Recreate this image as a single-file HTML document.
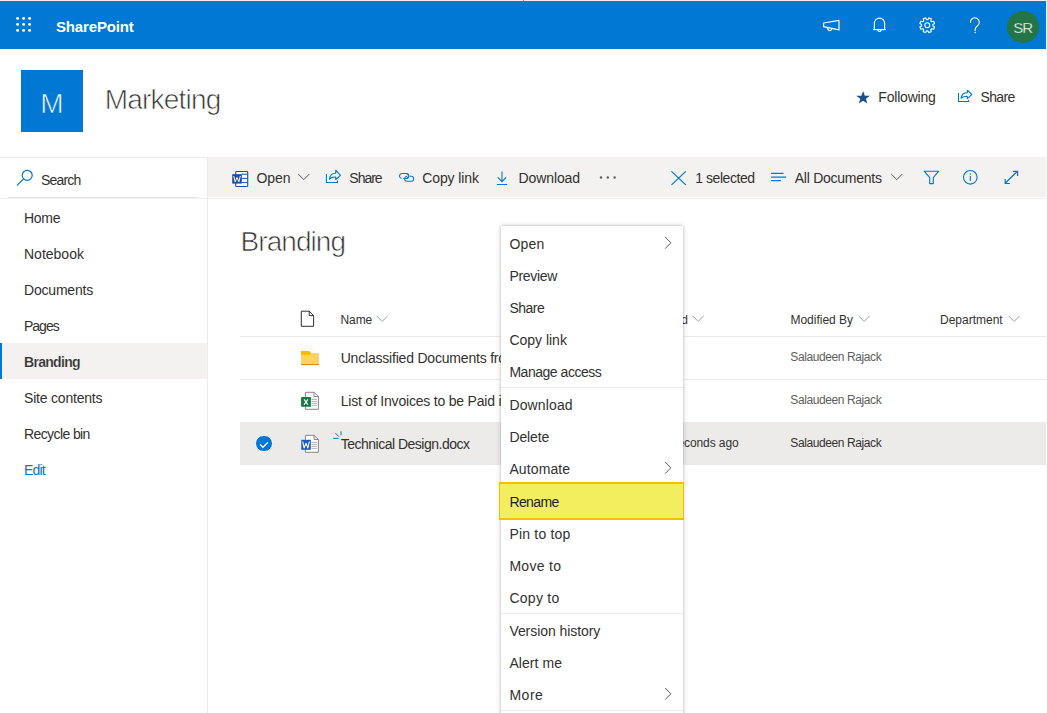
<!DOCTYPE html>
<html><head><meta charset="utf-8">
<style>
*{box-sizing:border-box;margin:0;padding:0}
html,body{width:1047px;height:713px;overflow:hidden;background:#fff}
body{position:relative;font-family:"Liberation Sans",sans-serif;color:#323130}
.a{position:absolute}
.t{position:absolute;white-space:nowrap;line-height:1;font-size:14px}
svg{position:absolute;overflow:visible}
</style></head><body>

<!-- top strip -->
<div class="a" style="left:0;top:0;width:1047px;height:1px;background:#f6ebe6"></div>
<div class="a" style="left:523px;top:0;width:1px;height:1px;background:#9a8f8a"></div>
<!-- suite header -->
<div class="a" style="left:0;top:1px;width:1046px;height:48px;background:#0078d4"></div>
<svg style="left:0;top:0" width="60" height="49">
 <g fill="#fff">
  <circle cx="17.6" cy="18.4" r="1.45"/><circle cx="23.6" cy="18.4" r="1.45"/><circle cx="29.6" cy="18.4" r="1.45"/>
  <circle cx="17.6" cy="24.4" r="1.45"/><circle cx="23.6" cy="24.4" r="1.45"/><circle cx="29.6" cy="24.4" r="1.45"/>
  <circle cx="17.6" cy="30.4" r="1.45"/><circle cx="23.6" cy="30.4" r="1.45"/><circle cx="29.6" cy="30.4" r="1.45"/>
 </g>
</svg>
<div class="t" style="left:56px;top:18.8px;font-size:15px;font-weight:700;color:#fff;letter-spacing:-0.15px">SharePoint</div>

<!-- megaphone -->
<svg style="left:815px;top:12px" width="30" height="26">
 <g fill="none" stroke="#fff" stroke-width="1.2" stroke-linejoin="round">
  <path d="M8.6,11 L24,8.3 L24,17.9 L8.6,14.7 Z"/>
  <path d="M12.5,15.6 C12.5,19.4 16.8,19.4 16.8,16.4"/>
 </g>
</svg>
<!-- bell -->
<svg style="left:865px;top:12px" width="30" height="26">
 <g fill="none" stroke="#fff" stroke-width="1.2">
  <path d="M9.4,17.6 L9.4,11.3 A5.1,5.1 0 0 1 19.6,11.3 L19.6,17.6"/>
  <path d="M8,17.6 L20.8,17.6" />
  <path d="M12.8,17.8 A1.7,1.7 0 0 0 16.2,17.8"/>
 </g>
</svg>
<!-- gear -->
<svg style="left:918.85px;top:16.7px" width="17" height="17">
 <path fill="none" stroke="#fff" stroke-width="1.1" stroke-linejoin="round" d="M8.95,2.59 L9.92,0.89 L12.28,1.86 L11.76,3.76 L12.74,4.74 L14.64,4.22 L15.61,6.58 L13.91,7.55 L13.91,8.95 L15.61,9.92 L14.64,12.28 L12.74,11.76 L11.76,12.74 L12.28,14.64 L9.92,15.61 L8.95,13.91 L7.55,13.91 L6.58,15.61 L4.22,14.64 L4.74,12.74 L3.76,11.76 L1.86,12.28 L0.89,9.92 L2.59,8.95 L2.59,7.55 L0.89,6.58 L1.86,4.22 L3.76,4.74 L4.74,3.76 L4.22,1.86 L6.58,0.89 L7.55,2.59Z"/>
 <circle cx="8.25" cy="8.25" r="2.45" fill="none" stroke="#fff" stroke-width="1.1"/>
</svg>
<!-- help -->
<svg style="left:965px;top:12.8px" width="20" height="26">
 <g fill="none" stroke="#fff" stroke-width="1.15" stroke-linecap="round">
  <path d="M5.4,9.3 A4.45,4.45 0 1 1 12.5,12.8 C10.8,14 10.2,14.9 10.2,16.6 L10.2,17.4"/>
 </g>
 <circle cx="10.2" cy="19.4" r="0.75" fill="#fff"/>
</svg>
<!-- avatar -->
<div class="a" style="left:1007.4px;top:11px;width:31.6px;height:31.6px;border-radius:50%;background:#237446"></div>
<div class="t" style="left:1007.4px;width:31.6px;text-align:center;top:20px;font-size:15px;color:#fff;letter-spacing:-0.9px;text-indent:-0.9px;-webkit-text-stroke:0.3px #237446">SR</div>

<!-- site header -->
<div class="a" style="left:21px;top:70px;width:62px;height:62px;background:#0078d4"></div>
<div class="t" style="left:21px;width:62px;text-align:center;top:89.8px;font-size:28px;color:#fff;-webkit-text-stroke:0.7px #0078d4">M</div>
<div class="t" style="left:104.8px;top:86px;font-size:28px;letter-spacing:-0.8px;color:#323130;-webkit-text-stroke:0.7px #fff;paint-order:normal">Marketing</div>

<!-- following / share -->
<svg style="left:855px;top:89px" width="17" height="16">
 <path fill="#1a4f8b" d="M8.10,1.90 L9.81,6.63 L15.02,6.74 L10.87,9.77 L12.38,14.56 L8.10,11.70 L3.82,14.56 L5.33,9.77 L1.18,6.74 L6.39,6.63Z"/>
</svg>
<div class="t" style="left:878.3px;top:89.8px;letter-spacing:-0.2px">Following</div>
<svg style="left:952px;top:84px" width="24" height="22">
 <g fill="none" stroke="#0078d4" stroke-width="1.05" stroke-linejoin="round">
  <path d="M6.5,9 L6.5,17.5 L16.7,17.5 L16.7,15.8"/>
  <path d="M15.3,6.2 L19.8,10.5 L15.3,14.7 L15.3,12.3 C12.7,12.2 10.7,12.8 9,14.3 C9.6,10.8 12,8.6 15.3,8.6 Z"/>
 </g>
</svg>
<div class="t" style="left:980.4px;top:89.8px;letter-spacing:-0.6px">Share</div>

<!-- line under site header -->
<div class="a" style="left:0;top:157px;width:208px;height:1px;background:#edebe9"></div>

<!-- left nav -->
<div class="a" style="left:207px;top:157px;width:1px;height:556px;background:#edebe9"></div>
<svg style="left:16px;top:169px" width="19" height="18">
 <g fill="none" stroke="#0078d4" stroke-width="1.2">
  <circle cx="11.2" cy="6.3" r="5"/>
  <path d="M7.6,9.9 L1.3,16.2" stroke-linecap="round"/>
 </g>
</svg>
<div class="t" style="left:41px;top:172.5px;letter-spacing:-0.8px">Search</div>
<div class="a" style="left:8px;top:197px;width:191px;height:2px;background:#e8e6e4"></div>

<div class="a" style="left:0;top:343px;width:207px;height:36px;background:#f3f2f1"></div>
<div class="a" style="left:0;top:343px;width:2px;height:36px;background:#0078d4"></div>
<div class="t" style="left:24px;top:210.9px;letter-spacing:-0.3px">Home</div>
<div class="t" style="left:24px;top:246.9px;letter-spacing:0px">Notebook</div>
<div class="t" style="left:24px;top:282.9px;letter-spacing:-0.2px">Documents</div>
<div class="t" style="left:24px;top:318.9px;letter-spacing:-1px">Pages</div>
<div class="t" style="left:24px;top:354.9px;font-weight:700;letter-spacing:-0.7px;-webkit-text-stroke:0.15px #f3f2f1">Branding</div>
<div class="t" style="left:24px;top:390.9px;letter-spacing:-0.2px">Site contents</div>
<div class="t" style="left:24px;top:426.9px;letter-spacing:-0.6px">Recycle bin</div>
<div class="t" style="left:24px;top:462.9px;color:#0078d4;letter-spacing:-0.8px">Edit</div>

<!-- command bar -->
<div class="a" style="left:208px;top:157px;width:838px;height:40px;background:#f3f2f1"></div>
<div class="a" style="left:0;top:198px;width:1046px;height:1px;background:#f0efee"></div>

<!-- word icon -->
<svg style="left:231px;top:170px" width="18" height="18">
 <rect x="4.7" y="1.5" width="12" height="15" rx="0.8" fill="#fff" stroke="#1f4e98" stroke-width="1.1"/>
 <path d="M10.5,4.2 H16.5 M10.5,8.4 H16.5 M10.5,12.6 H16.5" stroke="#1f4e98" stroke-width="1"/>
 <rect x="1.2" y="4.2" width="9.6" height="9.4" fill="#1f4e98"/>
 <path d="M2.7,6 L4.2,11.8 L6,7.4 L7.8,11.8 L9.3,6" fill="none" stroke="#fff" stroke-width="1" stroke-linejoin="round"/>
</svg>
<div class="t" style="left:256.5px;top:171px;letter-spacing:-0.1px">Open</div>
<svg style="left:297px;top:172px" width="14" height="10">
 <path d="M1.2,2 L6.8,7.6 L12.4,2" fill="none" stroke="#605e5c" stroke-width="1"/>
</svg>
<!-- share -->
<svg style="left:325px;top:169px" width="17" height="15">
 <g fill="none" stroke="#0078d4" stroke-width="1.05" stroke-linejoin="round">
  <path d="M1.4,4.9 L1.4,13.5 L12.5,13.5 L12.5,11.5"/>
  <path d="M10.7,1.2 L15.5,6.3 L10.7,10.5 L10.7,8.1 C8,8 5.8,8.7 4.4,10.2 C5,6.5 7.5,4.3 10.7,4.3 Z"/>
 </g>
</svg>
<div class="t" style="left:349.3px;top:171px;letter-spacing:-1px">Share</div>
<!-- link -->
<svg style="left:398px;top:172px" width="18" height="12">
 <g fill="none" stroke="#0078d4" stroke-width="1.05">
  <rect x="1.55" y="1.4" width="9.1" height="5.1" rx="2.55"/>
  <path d="M5.4,6.5 L3.5,6.5" stroke="#f3f2f1" stroke-width="1.6"/>
  <rect x="6.6" y="4.3" width="9.1" height="5.0" rx="2.5"/>
  <path d="M9.2,4.3 L11.5,4.3" stroke="#f3f2f1" stroke-width="1.6"/>
  <path d="M8.1,1.4 A2.55,2.55 0 0 1 8.1,6.5 L6.5,6.5"/>
 </g>
</svg>
<div class="t" style="left:422.2px;top:171px;letter-spacing:-0.1px">Copy link</div>
<!-- download -->
<svg style="left:495px;top:170px" width="14" height="16">
 <g fill="none" stroke="#0078d4" stroke-width="1.1">
  <path d="M7,1.5 L7,11.5 M2.8,7.4 L7,11.6 L11.2,7.4 M1.8,14.5 L12.2,14.5"/>
 </g>
</svg>
<div class="t" style="left:518.5px;top:171px;letter-spacing:-0.1px">Download</div>
<svg style="left:598px;top:174px" width="20" height="8">
 <g fill="#605e5c"><circle cx="3" cy="3.5" r="1.2"/><circle cx="9.8" cy="3.5" r="1.2"/><circle cx="16.6" cy="3.5" r="1.2"/></g>
</svg>
<!-- X -->
<svg style="left:670px;top:169.5px" width="18" height="17">
 <path d="M1.5,1.4 L15.8,14.9 M15.8,1.4 L1.5,14.9" fill="none" stroke="#0078d4" stroke-width="1.2"/>
</svg>
<div class="t" style="left:695.3px;top:171px;letter-spacing:-0.45px">1 selected</div>
<!-- lines -->
<svg style="left:770px;top:171px" width="18" height="12">
 <path d="M1.1,2.4 H13.6 M1.1,6.1 H16.2 M1.1,9.6 H10.8" fill="none" stroke="#0078d4" stroke-width="1.1"/>
</svg>
<div class="t" style="left:794.7px;top:171px;letter-spacing:-0.25px">All Documents</div>
<svg style="left:890px;top:172px" width="14" height="10">
 <path d="M1.2,2 L6.8,7.6 L12.4,2" fill="none" stroke="#605e5c" stroke-width="1"/>
</svg>
<!-- filter -->
<svg style="left:922.6px;top:170px" width="18" height="15">
 <path d="M1.2,1.2 L15.8,1.2 L10.3,7.6 L10.3,13.6 L6.7,13.6 L6.7,7.6 Z" fill="none" stroke="#0078d4" stroke-width="1.1" stroke-linejoin="round"/>
</svg>
<!-- info -->
<svg style="left:962px;top:170px" width="17" height="15">
 <circle cx="8.3" cy="7.3" r="6.8" fill="none" stroke="#0078d4" stroke-width="1.1"/>
 <path d="M8.3,6 V11" stroke="#0078d4" stroke-width="1.1"/>
 <circle cx="8.3" cy="3.9" r="0.75" fill="#0078d4"/>
</svg>
<!-- expand -->
<svg style="left:1003px;top:170px" width="17" height="16">
 <g fill="none" stroke="#0078d4" stroke-width="1.2">
  <path d="M2.4,13 L14.2,1.5 M10,1.3 L14.6,1.3 L14.6,5.9 M2.2,8.9 L2.2,13.5 L6.8,13.5"/>
 </g>
</svg>


<!-- content -->
<div class="t" style="left:240.6px;top:228.3px;font-size:28px;letter-spacing:-0.95px;-webkit-text-stroke:0.7px #fff">Branding</div>

<!-- list header -->
<svg style="left:300px;top:310px" width="16" height="18">
 <path d="M1.3,1.2 L9.2,1.2 L13.6,5.6 L13.6,16.3 L1.3,16.3 Z M9.2,1.2 L9.2,5.6 L13.6,5.6" fill="none" stroke="#323130" stroke-width="1" stroke-linejoin="round"/>
</svg>
<div class="t" style="left:340.5px;top:313.8px;font-size:12px;letter-spacing:-0.1px">Name</div>
<svg style="left:376px;top:315.4px" width="14" height="9"><path d="M0.8,1 L6.2,6.4 L11.6,1" fill="none" stroke="#a19f9d" stroke-width="1"/></svg>
<div class="t" style="left:642.5px;top:313.8px;font-size:12px">Modified</div>
<svg style="left:692px;top:315.4px" width="14" height="9"><path d="M0.8,1 L6.2,6.4 L11.6,1" fill="none" stroke="#a19f9d" stroke-width="1"/></svg>
<div class="t" style="left:790.4px;top:313.8px;font-size:12px">Modified By</div>
<svg style="left:858px;top:315.4px" width="14" height="9"><path d="M0.8,1 L6.2,6.4 L11.6,1" fill="none" stroke="#a19f9d" stroke-width="1"/></svg>
<div class="t" style="left:940px;top:313.8px;font-size:12px">Department</div>
<svg style="left:1007.5px;top:315.4px" width="14" height="9"><path d="M0.8,1 L6.2,6.4 L11.6,1" fill="none" stroke="#a19f9d" stroke-width="1"/></svg>
<div class="a" style="left:240px;top:336px;width:806px;height:1px;background:#edebe9"></div>

<!-- row 1 -->
<svg style="left:300px;top:350px" width="20" height="16">
 <path d="M1,1 L9.2,1 L11.2,3 L19,3 L19,15 L1,15 Z" fill="#ffd45c"/>
 <path d="M1,1 L9.2,1 L11.2,3 L9.8,4.9 L1,4.9 Z" fill="#ffb900"/>
 <rect x="1" y="14" width="18" height="1.1" fill="#e3890d"/>
</svg>
<div class="t" style="left:340.7px;top:351px;letter-spacing:-0.2px">Unclassified Documents from Old Site</div>
<div class="t" style="left:790.3px;top:351.2px;font-size:12px;color:#605e5c;letter-spacing:-0.4px">Salaudeen Rajack</div>
<div class="a" style="left:240px;top:379px;width:806px;height:1px;background:#edebe9"></div>

<!-- row 2 -->
<svg style="left:300px;top:391px" width="20" height="20">
 <path d="M5.4,1.3 L14.2,1.3 L18.4,5.5 L18.4,18.3 L5.4,18.3 Z M14,1.3 L14,5.5 L18.4,5.5" fill="#fff" stroke="#8a8886" stroke-width="1" stroke-linejoin="round"/>
 <path d="M11.5,8.4 H17 M11.5,10.4 H17 M11.5,12.4 H17 M11.5,14.4 H17" stroke="#a19f9d" stroke-width="0.8"/>
 <rect x="1.1" y="6" width="9.8" height="9.8" rx="0.6" fill="#107c41"/>
 <path d="M4.1,8.3 L7.9,13.6 M7.9,8.3 L4.1,13.6" stroke="#fff" stroke-width="1.15"/>
</svg>
<div class="t" style="left:340.7px;top:393.9px;letter-spacing:-0.2px">List of Invoices to be Paid in 2020</div>
<div class="t" style="left:790.3px;top:394.2px;font-size:12px;color:#605e5c;letter-spacing:-0.4px">Salaudeen Rajack</div>

<!-- row 3 selected -->
<div class="a" style="left:240px;top:422px;width:806px;height:43px;background:#edebe9"></div>
<div class="a" style="left:255.2px;top:435px;width:17.4px;height:17.4px;border-radius:50%;background:#0078d4;border:1.1px solid #fff"></div>
<svg style="left:255px;top:435px" width="18" height="18">
 <path d="M5.2,9.6 L7.9,12.2 L13,7.2" fill="none" stroke="#fff" stroke-width="1.4"/>
</svg>
<svg style="left:300px;top:434px" width="20" height="20">
 <path d="M5.4,1.3 L14.2,1.3 L18.4,5.5 L18.4,18.3 L5.4,18.3 Z M14,1.3 L14,5.5 L18.4,5.5" fill="#fff" stroke="#8a8886" stroke-width="1" stroke-linejoin="round"/>
 <path d="M11.5,8.4 H17 M11.5,10.4 H17 M11.5,12.4 H17 M11.5,14.4 H17" stroke="#a19f9d" stroke-width="0.8"/>
 <rect x="1.3" y="5.8" width="9.5" height="10" fill="#185abd"/>
 <path d="M2.7,7.6 L4.1,14 L6,9.2 L7.9,14 L9.3,7.6" fill="none" stroke="#fff" stroke-width="1.1" stroke-linejoin="round"/>
</svg>
<svg style="left:332px;top:430px" width="10" height="10">
 <path d="M1.2,8.4 H6.6 M3.4,3.1 L7,6.8 M9,1.3 V5.3" fill="none" stroke="#0078d4" stroke-width="1"/>
</svg>
<div class="t" style="left:340.7px;top:436.8px;letter-spacing:-0.5px">Technical Design.docx</div>
<div class="t" style="left:639.5px;top:436.6px;font-size:12px;letter-spacing:-0.1px">A few seconds ago</div>
<div class="t" style="left:790.3px;top:437.2px;font-size:12px;color:#323130;letter-spacing:-0.4px">Salaudeen Rajack</div>


<!-- context menu -->
<div class="a" style="left:501px;top:226px;width:182px;height:500px;background:#fff;box-shadow:0 0 2px rgba(0,0,0,0.22),0 0 6px rgba(0,0,0,0.16)"></div>
<div class="a" style="left:501px;top:387px;width:182px;height:1px;background:#edebe9"></div>
<div class="a" style="left:501px;top:613px;width:182px;height:1px;background:#edebe9"></div>
<div class="a" style="left:501px;top:710px;width:182px;height:1px;background:#edebe9"></div>
<div class="a" style="left:499px;top:482px;width:185px;height:38px;background:#f2ee5e;border:2px solid #f0c000;border-left-width:1.5px;border-right-width:1.5px"></div>
<div class="t" style="left:509.4px;top:237.15px;letter-spacing:0.25px">Open</div>
<svg style="left:664px;top:236.0px" width="9" height="14"><path d="M1.2,1 L6.8,6.8 L1.2,12.6" fill="none" stroke="#605e5c" stroke-width="1"/></svg>
<div class="t" style="left:509.4px;top:269.15px;letter-spacing:-0.31px">Preview</div>
<div class="t" style="left:509.4px;top:301.15px;letter-spacing:-0.49px">Share</div>
<div class="t" style="left:509.4px;top:333.15px;letter-spacing:-0.01px">Copy link</div>
<div class="t" style="left:509.4px;top:365.15px;letter-spacing:-0.47px">Manage access</div>
<div class="t" style="left:509.4px;top:398.15px;letter-spacing:0.14px">Download</div>
<div class="t" style="left:509.4px;top:430.15px;letter-spacing:-0.10px">Delete</div>
<div class="t" style="left:509.4px;top:462.15px;letter-spacing:0.11px">Automate</div>
<svg style="left:664px;top:461.0px" width="9" height="14"><path d="M1.2,1 L6.8,6.8 L1.2,12.6" fill="none" stroke="#605e5c" stroke-width="1"/></svg>
<div class="t" style="left:509.4px;top:494.65px;letter-spacing:-0.60px;color:#201f1e">Rename</div>
<div class="t" style="left:509.4px;top:526.85px;letter-spacing:0.20px">Pin to top</div>
<div class="t" style="left:509.4px;top:558.65px;letter-spacing:0.31px">Move to</div>
<div class="t" style="left:509.4px;top:590.65px;letter-spacing:0.28px">Copy to</div>
<div class="t" style="left:509.4px;top:623.85px;letter-spacing:-0.06px">Version history</div>
<div class="t" style="left:509.4px;top:655.85px;letter-spacing:0.06px">Alert me</div>
<div class="t" style="left:509.4px;top:687.85px;letter-spacing:0.52px">More</div>
<svg style="left:664px;top:686.7px" width="9" height="14"><path d="M1.2,1 L6.8,6.8 L1.2,12.6" fill="none" stroke="#605e5c" stroke-width="1"/></svg>

<!-- right strip -->
<div class="a" style="left:1046px;top:0;width:1px;height:713px;background:#f9f9f9"></div>
</body></html>
